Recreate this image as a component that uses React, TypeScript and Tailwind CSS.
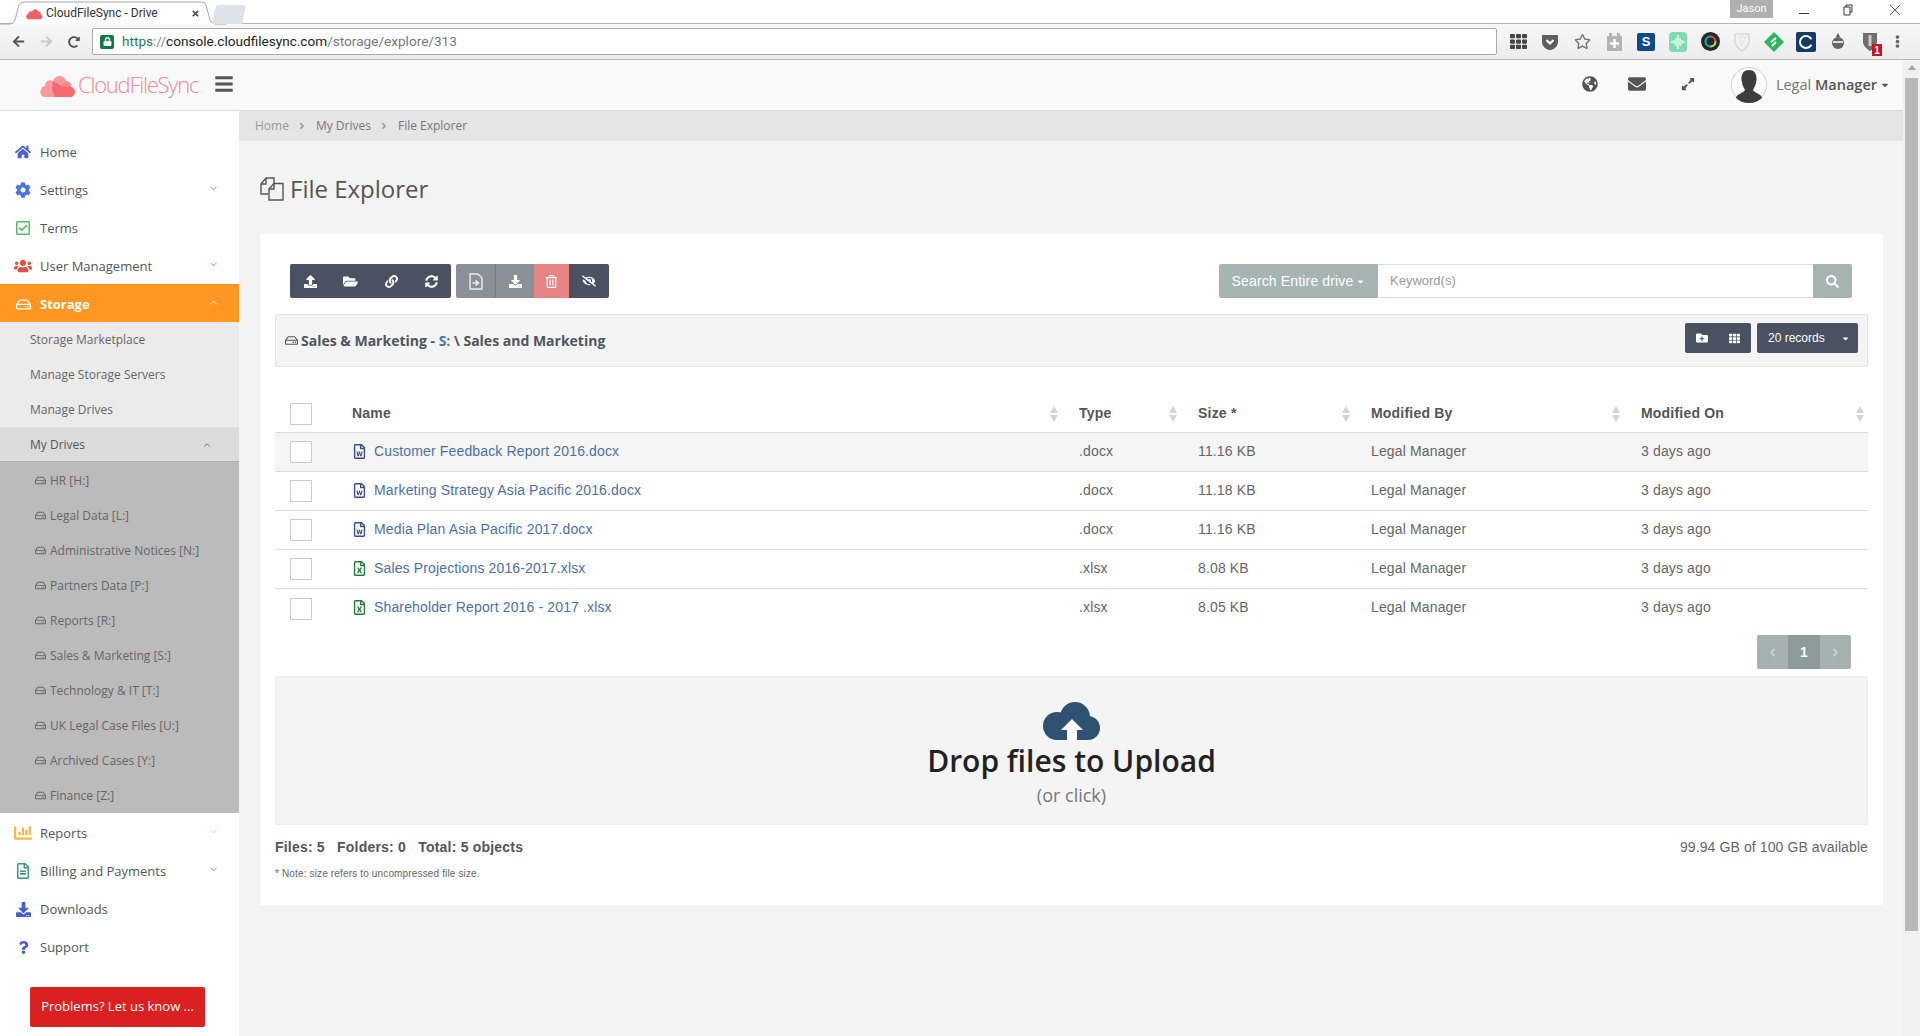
import React from "react";
import {
  FaHome, FaCog, FaRegCheckSquare, FaUsers, FaRegHdd, FaRegFileAlt, FaDownload, FaQuestion,
  FaUpload, FaFolderOpen, FaLink, FaSyncAlt, FaRegTrashAlt, FaEyeSlash, FaTh, FaSearch, FaGlobeAmericas, FaEnvelope,
  FaExpandAlt, FaRegFileWord, FaRegFileExcel, FaAngleLeft, FaAngleRight, FaCaretDown, FaBars, FaFolderPlus, FaChartBar, FaArrowLeft, FaArrowRight, FaRedoAlt, FaLock, FaRegStar, FaEllipsisV, FaTimes,
} from "react-icons/fa";
import { ChevronDown, ChevronUp } from "lucide-react";

const OS = "font-['Open_Sans',sans-serif]";
const AR = "font-['Liberation_Sans',Arial,sans-serif]";

function Logo() {
  return (
    <svg width="36" height="26" viewBox="0 0 36 26">
      <path d="M4 25 C-1 24 -1 15 5 14 C5 9 10 7 13 9 C15 3 24 2 26 9 C30 9 32 12 31 15 C36 16 36 24 31 25 Z" fill="#f79a9e" />
      <path d="M13 9 L21 14 L31 15 C36 16 36 24 31 25 L15 25 L12 18 Z" fill="#f9686e" />
      <path d="M21 14 L26 9 L31 15 Z" fill="#f7868a" />
    </svg>
  );
}

function Avatar() {
  return (
    <svg width="36" height="36" viewBox="0 0 36 36">
      <circle cx="18" cy="18" r="17.5" fill="#fff" stroke="#ccc" />
      <path d="M18 3 C24 3 26 8 25.5 13 C25 18 23 21 22 23 C23 26 31 27 31 31 C28 34 23 36 18 36 C13 36 8 34 5 31 C5 27 13 26 14 23 C13 21 11 18 10.5 13 C10 8 12 3 18 3 Z" fill="#3d3d3d" />
    </svg>
  );
}

function TabShape() {
  return (
    <svg className="absolute left-0 top-0" width="226" height="25" viewBox="0 0 226 25">
      <path d="M0 24 H10 Q14 24 15 20 L19 5 Q20 2 24 2 H201 Q205 2 206 5 L210 20 Q211 24 216 24 H226" fill="#fff" stroke="#a8a8a8" />
    </svg>
  );
}

function Ext({ children }: { children: React.ReactNode }) {
  return <div className="flex h-[20px] w-[32px] items-center justify-center">{children}</div>;
}

function BrowserChrome() {
  return (
    <div className="flex h-[60px] flex-col border-b border-[#b8b8b8] bg-white">
      <div className="flex h-[24px] items-start border-b border-[#b5b5b5] bg-white">
        <div className="relative h-[25px] w-[226px] shrink-0">
          <TabShape />
          <div className="relative flex h-[24px] items-center pl-[26px] pt-[2px]">
            <svg width="17" height="13" viewBox="0 0 36 26">
              <path d="M4 25 C-1 24 -1 15 5 14 C5 9 10 7 13 9 C15 3 24 2 26 9 C30 9 32 12 31 15 C36 16 36 24 31 25 Z" fill="#f25f64" />
            </svg>
            <span className={`ml-[3px] w-[145px] text-[12px] text-[#333] font-['Roboto',sans-serif]`}>CloudFileSync - Drive</span>
            <FaTimes className="text-[9px] text-[#555]" />
          </div>
        </div>
        <div className="mt-[5px] -ml-[12px] h-[19px] w-[30px] -skew-x-12 rounded-t-[3px] bg-[#dde1e8]" />
        <div className="flex-1" />
        <div className={`flex h-[18px] w-[43px] items-center justify-center bg-[#b0b0b0] text-[11px] text-[#fff] font-['Roboto',sans-serif]`}>Jason</div>
        <div className="flex w-[147px] items-center pt-[4px] text-[#333]">
          <div className="ml-[26px] h-[1px] w-[10px] bg-[#333] mt-[6px]" />
          <svg className="ml-[34px]" width="10" height="12" viewBox="0 0 10 12"><path d="M3 3 V1 H9 V8 H7 M1 3 H7 V11 H1 Z" fill="none" stroke="#333" /></svg>
          <svg className="ml-[37px]" width="10" height="10" viewBox="0 0 10 10"><path d="M0 0 L10 10 M10 0 L0 10" stroke="#333" strokeWidth="0.8" /></svg>
        </div>
      </div>
      <div className="flex h-[35px] items-center bg-[linear-gradient(#f7f7f7,#ececec)]">
        <div className="flex w-[92px] shrink-0 items-center pl-[12px] text-[#555]">
          <FaArrowLeft className="text-[13px]" />
          <FaArrowRight className="ml-[15px] text-[13px] text-[#ccc]" />
          <FaRedoAlt className="ml-[15px] text-[12px]" />
        </div>
        <div className="flex h-[27px] w-[1405px] shrink-0 items-center rounded-[2px] border border-[#aaa] bg-white pl-[7px] text-[13.6px] font-['Roboto',sans-serif]">
          <div className="flex h-[14px] w-[14px] items-center justify-center rounded-[2px] bg-[#0f7b3f]">
            <FaLock className="text-[9px] text-white" />
          </div>
          <span className="ml-[8px] text-[#2a7d4a]">https</span>
          <span className="text-[#888]">://</span>
          <span className="text-[#222]">console.cloudfilesync.com</span>
          <span className="text-[#777]">/storage/explore/313</span>
        </div>
        <div className="ml-[5px] flex items-center">
          <Ext><FaTh className="text-[17px] text-[#444]" /></Ext>
          <Ext>
            <svg width="18" height="18" viewBox="0 0 18 18"><path d="M1 2 H17 V9 C17 13 13 17 9 17 C5 17 1 13 1 9 Z" fill="#5f5f5f" /><path d="M5.5 7 L9 10.5 L12.5 7" fill="none" stroke="#fff" strokeWidth="2.2" /></svg>
          </Ext>
          <Ext><FaRegStar className="text-[17px] text-[#777]" /></Ext>
          <Ext>
            <svg width="17" height="18" viewBox="0 0 17 18"><rect x="1" y="3" width="15" height="15" fill="#b0b4b4" /><rect x="3" y="0" width="3" height="5" fill="#b0b4b4" /><rect x="11" y="0" width="3" height="5" fill="#b0b4b4" /><path d="M8.5 6 V15 M4 10.5 H13" stroke="#fff" strokeWidth="2.4" /></svg>
          </Ext>
          <Ext>
            <div className={`flex h-[18px] w-[18px] items-center justify-center rounded-[2px] bg-[#0e4a86] text-[13px] font-bold text-white ${AR}`}>S</div>
          </Ext>
          <Ext>
            <svg width="18" height="20" viewBox="0 0 18 20"><rect x="0" y="0" width="18" height="20" rx="4" fill="#7fdcb0" /><path d="M3 9 V11 M5 8 V12 M7 6 V14 M9 3 V17 M11 6 V14 M13 8 V12 M15 9 V11" stroke="#fff" strokeWidth="1.2" /></svg>
          </Ext>
          <Ext>
            <svg width="19" height="19" viewBox="0 0 19 19"><circle cx="9.5" cy="9.5" r="9.5" fill="#25272b" /><circle cx="9.5" cy="9.5" r="5" fill="none" stroke="#2aa" strokeWidth="2" /><path d="M9.5 4.5 A5 5 0 0 1 14.5 9.5" fill="none" stroke="#d33" strokeWidth="2" /><path d="M14.5 9.5 A5 5 0 0 1 9.5 14.5" fill="none" stroke="#dc3" strokeWidth="2" /></svg>
          </Ext>
          <Ext>
            <svg width="16" height="20" viewBox="0 0 16 20"><path d="M1 2 H15 V9 C15 14 11 17 8 19 C5 17 1 14 1 9 Z" fill="none" stroke="#d8d8d8" strokeWidth="1.5" /><path d="M5 5 H11 L8 14 Z" fill="none" stroke="#e0e0e0" /></svg>
          </Ext>
          <Ext>
            <svg width="20" height="20" viewBox="0 0 20 20"><path d="M10 0 L20 10 L10 20 L0 10 Z" fill="#2fb45f" /><path d="M7 10 L12 6 M8 14 L12 10" stroke="#fff" strokeWidth="2" /></svg>
          </Ext>
          <Ext>
            <svg width="20" height="20" viewBox="0 0 20 20"><rect width="20" height="20" rx="2" fill="#143a66" /><circle cx="10" cy="10" r="6" fill="none" stroke="#fff" strokeWidth="2" /><path d="M10 10 L18 6 V14 Z" fill="#143a66" /></svg>
          </Ext>
          <Ext>
            <svg width="14" height="19" viewBox="0 0 14 19"><circle cx="7" cy="11" r="6" fill="#666" /><path d="M5 5 L7 1 L9 5 Z" fill="#555" /><rect x="2" y="9" width="10" height="2" fill="#ddd" /></svg>
          </Ext>
          <Ext>
            <div className="relative">
              <svg width="16" height="19" viewBox="0 0 16 19"><path d="M1 1 H15 V10 C15 14 11 17 8 19 C5 17 1 14 1 10 Z" fill="#6d6d6d" /><path d="M8 3 V14" stroke="#ccc" strokeWidth="3" /></svg>
              <div className={`absolute -right-[4px] -bottom-[5px] flex h-[12px] w-[10px] items-center justify-center bg-[#c5161d] text-[10px] font-bold text-white ${AR}`}>1</div>
            </div>
          </Ext>
          <FaEllipsisV className="ml-[5px] text-[13px] text-[#666]" />
        </div>
      </div>
    </div>
  );
}

function Header() {
  return (
    <div className="flex h-[51px] shrink-0 items-center border-b border-[#dcdcdc] bg-[#f9f9f9]">
      <div className="ml-[40px]"><Logo /></div>
      <span className={`mb-[1px] ml-[2px] text-[22px] font-light tracking-[-1.24px] text-[#ef8b92] ${OS}`}>CloudFileSync</span>
      <FaBars className="mb-[3px] ml-[16px] text-[20px] text-[#555]" />
      <div className="flex-1" />
      <FaGlobeAmericas className="mb-[3px] text-[16px] text-[#555]" />
      <FaEnvelope className="mb-[3px] ml-[30px] text-[18px] text-[#555]" />
      <FaExpandAlt className="mb-[3px] ml-[35px] text-[14px] text-[#555]" />
      <div className="ml-[36px]"><Avatar /></div>
      <span className={`ml-[9px] text-[14.5px] text-[#777] ${OS}`}>Legal <span className="font-semibold text-[#555]">Manager</span></span>
      <FaCaretDown className="ml-[3px] mr-[13px] text-[10px] text-[#555]" />
    </div>
  );
}

function NavItem({ icon, label, chevron, active, chevColor }: { icon: React.ReactNode; label: string; chevron?: "down" | "up"; active?: boolean; chevColor?: string }) {
  return (
    <div className={`flex h-[38px] items-center ${active ? "bg-[#ff9722] font-bold text-white" : "text-[#555]"} text-[13px] ${OS}`}>
      <div className="flex w-[40px] shrink-0 items-center justify-center pl-[6px] pt-[2px]">{icon}</div>
      <span className="flex-1 pt-[4px]">{label}</span>
      {chevron === "down" && <ChevronDown size={11} strokeWidth={1.5} className={`mb-[2px] mr-[20px] ${chevColor ?? "text-[#556]"}`} />}
      {chevron === "up" && <ChevronUp size={11} strokeWidth={2} className="mb-[2px] mr-[20px] text-white" />}
    </div>
  );
}

const drives = ["HR [H:]", "Legal Data [L:]", "Administrative Notices [N:]", "Partners Data [P:]", "Reports [R:]", "Sales & Marketing [S:]", "Technology & IT [T:]", "UK Legal Case Files [U:]", "Archived Cases [Y:]", "Finance [Z:]"];

function Sidebar() {
  return (
    <div className="w-[239px] shrink-0 bg-white pt-[21px]">
      <NavItem icon={<FaHome className="text-[16px] text-[#4a62c9]" />} label="Home" />
      <NavItem icon={<FaCog className="text-[16px] text-[#4a74e0]" />} label="Settings" chevron="down" chevColor="text-[#4a62a9]" />
      <NavItem icon={<FaRegCheckSquare className="text-[16px] text-[#5cb86c]" />} label="Terms" />
      <NavItem icon={<FaUsers className="text-[18px] text-[#e0534a]" />} label="User Management" chevron="down" chevColor="text-[#c9534a]" />
      <NavItem icon={<FaRegHdd className="text-[15px] text-white" />} label="Storage" chevron="up" active />
      <div className={`bg-[#ebebeb] text-[12px] text-[#666] ${OS}`}>
        <div className="flex h-[35px] items-center pl-[30px]">Storage Marketplace</div>
        <div className="flex h-[35px] items-center pl-[30px]">Manage Storage Servers</div>
        <div className="flex h-[35px] items-center pl-[30px]">Manage Drives</div>
        <div className="flex h-[35px] items-center justify-between border-b border-[#b0b0b0] bg-[#dcdcdc] pl-[30px] pr-[27px] pt-[2px] text-[#555]">
          My Drives
          <ChevronUp size={10} strokeWidth={2} className="text-[#555]" />
        </div>
      </div>
      <div className={`bg-[#bbbbbb] pt-[1px] text-[12px] text-[#666] ${OS}`}>
        {drives.map((d) => (
          <div key={d} className="flex h-[35px] items-center pl-[35px]">
            <FaRegHdd className="mr-[4px] text-[11px]" />
            {d}
          </div>
        ))}
      </div>
      <NavItem icon={<FaChartBar className="text-[18px] text-[#f5b64a]" />} label="Reports" chevron="down" chevColor="text-[#f0b98a]" />
      <NavItem icon={<FaRegFileAlt className="text-[16px] text-[#3a9a70]" />} label="Billing and Payments" chevron="down" chevColor="text-[#556]" />
      <NavItem icon={<FaDownload className="text-[15px] text-[#4a5fc9]" />} label="Downloads" />
      <NavItem icon={<FaQuestion className="text-[13px] text-[#4a5fc9]" />} label="Support" />
      <div className="pl-[30px] pt-[22px]">
        <div className={`flex h-[40px] w-[175px] items-center justify-center rounded-[2px] bg-[#da2020] text-[13px] text-white ${OS}`}>Problems? Let us know ...</div>
      </div>
    </div>
  );
}

function SortIcon() {
  return (
    <svg width="8" height="16" viewBox="0 0 8 16">
      <path d="M4 0 L8 7 H0 Z M0 9 H8 L4 16 Z" fill="#d5d5d5" />
    </svg>
  );
}

function Th({ label, last }: { label: string; last?: boolean }) {
  return (
    <div className={`flex items-center justify-between ${last ? "pr-[4px]" : "pr-[21px]"}`}>
      <span className="font-bold tracking-[0.2px] text-[#555]">{label}</span>
      <SortIcon />
    </div>
  );
}

const COLS = "grid grid-cols-[77px_727px_119px_173px_270px_227px] items-center";

const files = [
  { n: "Customer Feedback Report 2016.docx", t: ".docx", s: "11.16 KB", x: false },
  { n: "Marketing Strategy Asia Pacific 2016.docx", t: ".docx", s: "11.18 KB", x: false },
  { n: "Media Plan Asia Pacific 2017.docx", t: ".docx", s: "11.16 KB", x: false },
  { n: "Sales Projections 2016-2017.xlsx", t: ".xlsx", s: "8.08 KB", x: true },
  { n: "Shareholder Report 2016 - 2017 .xlsx", t: ".xlsx", s: "8.05 KB", x: true },
];

function Check({ row }: { row?: boolean }) {
  return <div className={`ml-[15px] h-[22px] w-[22px] border border-[#ccc] bg-white ${row ? "mt-[2px]" : ""}`} />;
}

function ToolBtn({ children, bg, w }: { children: React.ReactNode; bg: string; w: string }) {
  return <div className={`flex h-full items-center justify-center ${bg} ${w}`}>{children}</div>;
}

function FileArrowIcon() {
  return (
    <svg width="14" height="17" viewBox="0 0 14 17">
      <path d="M1 1 H9 L13 5 V16 H1 Z" fill="none" stroke="#eee" strokeWidth="1.4" />
      <path d="M3.5 10 H8 M6.5 7.5 L9.5 10 L6.5 12.5" fill="none" stroke="#eee" strokeWidth="1.6" />
    </svg>
  );
}

function TitleIcon() {
  return (
    <svg width="24" height="24" viewBox="0 0 24 24" fill="none" stroke="#555" strokeWidth="1.4">
      <path d="M8 17 H1 V7 L6 1 H14 V6" />
      <path d="M9 12 L14 6.5 H23 V23 H9 Z" />
      <path d="M1 7 H6 V1 M9 12 H14 V6.5" />
    </svg>
  );
}

function UploadCloud() {
  return (
    <svg width="60" height="38" viewBox="0 0 60 38">
      <g fill="#2f5272">
        <circle cx="15" cy="24" r="14" />
        <circle cx="33" cy="15" r="15" />
        <circle cx="46" cy="26" r="12" />
        <rect x="15" y="18" width="31" height="20" />
      </g>
      <path d="M30 17 L41 28 H35 V38 H25 V28 H19 Z" fill="#fff" />
    </svg>
  );
}

function FileCard() {
  return (
    <div className={`mx-[20px] ml-[21px] h-[671px] bg-white px-[15px] pt-[30px] ${AR}`}>
      <div className="flex h-[34px] items-center">
        <div className="ml-[15px] flex h-[34px] overflow-hidden rounded-[2px] bg-[#4a5160] text-white">
          <ToolBtn bg="" w="w-[40px]"><FaUpload className="text-[13px]" /></ToolBtn>
          <ToolBtn bg="" w="w-[41px]"><FaFolderOpen className="text-[15px]" /></ToolBtn>
          <ToolBtn bg="" w="w-[41px]"><FaLink className="text-[13px]" /></ToolBtn>
          <ToolBtn bg="" w="w-[39px]"><FaSyncAlt className="text-[13px]" /></ToolBtn>
        </div>
        <div className="ml-[5px] flex h-[34px] overflow-hidden rounded-[2px] text-white">
          <ToolBtn bg="bg-[#8b8f98] border-r border-[#777b84]" w="w-[40px]"><FileArrowIcon /></ToolBtn>
          <ToolBtn bg="bg-[#8b8f98]" w="w-[38px]"><FaDownload className="text-[13px]" /></ToolBtn>
          <ToolBtn bg="bg-[#e68484]" w="w-[35px]"><FaRegTrashAlt className="text-[13px]" /></ToolBtn>
          <ToolBtn bg="bg-[#4a5160]" w="w-[40px]"><FaEyeSlash className="text-[14px]" /></ToolBtn>
        </div>
        <div className="flex-1" />
        <div className="mr-[16px] flex h-[34px] w-[633px] overflow-hidden rounded-[2px] text-[14px]">
          <div className="flex w-[159px] items-center justify-center bg-[#a6b4b4] tracking-[0.15px] text-white">
            Search Entire drive
            <FaCaretDown className="ml-[3px] text-[9px]" />
          </div>
          <div className="flex flex-1 items-center border-y border-[#ddd] bg-white pl-[12px] text-[13px] text-[#999]">Keyword(s)</div>
          <div className="flex w-[39px] items-center justify-center bg-[#a6b4b4] text-white"><FaSearch className="text-[13px]" /></div>
        </div>
      </div>

      <div className="mt-[16px] flex h-[53px] items-center justify-between rounded-[2px] border border-[#e4e4e4] bg-[#f4f4f4] pl-[9px] pr-[9px]">
        <div className={`flex items-center text-[14px] font-bold text-[#4f5561] ${OS}`}>
          <FaRegHdd className="mr-[3px] text-[13px]" />
          <span>Sales &amp; Marketing - <span className="text-[#3c78b5]">S:</span> \ Sales and Marketing</span>
        </div>
        <div className="mb-[5px] flex h-[30px] items-center text-white">
          <div className="flex h-[30px] w-[66px] rounded-[2px] bg-[#4a5160]">
            <div className="flex w-[33px] items-center justify-center"><FaFolderPlus className="text-[12px]" /></div>
            <div className="flex w-[33px] items-center justify-center"><FaTh className="text-[11px]" /></div>
          </div>
          <div className="ml-[6px] flex h-[30px] w-[101px] items-center rounded-[2px] bg-[#4a5160] pl-[11px] text-[12px]">
            <span className="flex-1">20 records</span>
            <FaCaretDown className="mr-[8px] text-[9px]" />
          </div>
        </div>
      </div>

      <div className={`${COLS} mt-[24px] h-[42px] border-b border-[#ddd] pt-[4px] text-[14px]`}>
        <Check />
        <Th label="Name" />
        <Th label="Type" />
        <Th label="Size *" />
        <Th label="Modified By" />
        <Th label="Modified On" last />
      </div>
      {files.map((f, i) => (
        <div key={f.n} className={`${COLS} h-[39px] pb-[2px] text-[14px] tracking-[0.14px] text-[#666] ${i === 0 ? "bg-[#f5f5f5]" : ""} ${i < 4 ? "border-b border-[#ddd]" : ""}`}>
          <Check row />
          <div className="flex items-center text-[#4c70a6]">
            {f.x ? <FaRegFileExcel className="mr-[7px] text-[15px] text-[#2a7a3e]" /> : <FaRegFileWord className="mr-[7px] text-[15px] text-[#3a4f8a]" />}
            {f.n}
          </div>
          <div>{f.t}</div>
          <div>{f.s}</div>
          <div>Legal Manager</div>
          <div>3 days ago</div>
        </div>
      ))}

      <div className="mt-[7px] flex h-[34px] justify-end pr-[17px]">
        <div className="flex overflow-hidden rounded-[2px] bg-[#a5b1b1] text-white">
          <div className="flex w-[31px] items-center justify-center"><FaAngleLeft className="text-[13px] text-[#c5cfcf]" /></div>
          <div className="flex w-[32px] items-center justify-center rounded-[2px] bg-[#8c9a9a] text-[14px] font-bold">1</div>
          <div className="flex w-[31px] items-center justify-center"><FaAngleRight className="text-[13px] text-[#c5cfcf]" /></div>
        </div>
      </div>

      <div className={`mt-[7px] flex h-[149px] flex-col items-center rounded-[2px] border border-[#eee] bg-[#f4f4f4] ${OS}`}>
        <div className="mt-[25px] h-[38px]"><UploadCloud /></div>
        <div className="mt-[1px] text-[30px] font-semibold leading-[40px] text-[#222]">Drop files to Upload</div>
        <div className="mt-[1px] text-[18px] leading-[26px] text-[#777]">(or click)</div>
      </div>

      <div className="mt-[14px] flex items-center justify-between text-[14px] leading-[16px]">
        <span className="font-bold tracking-[0.2px] text-[#555]">Files: 5 &nbsp; Folders: 0 &nbsp; Total: 5 objects</span>
        <span className="tracking-[0.1px] text-[#666]">99.94 GB of 100 GB available</span>
      </div>
      <div className="mt-[11px] text-[10px] tracking-[0.15px] text-[#666]">* Note: size refers to uncompressed file size.</div>
    </div>
  );
}

function Main() {
  return (
    <div className="flex-1 bg-[#f3f3f3]">
      <div className={`flex h-[30px] items-center bg-[#e5e5e5] pl-[16px] text-[12px] text-[#777] ${OS}`}>
        <span className="text-[#999]">Home</span>
        <FaAngleRight className="mx-[8.5px] text-[10px] text-[#999]" />
        <span>My Drives</span>
        <FaAngleRight className="mx-[8.5px] text-[10px] text-[#999]" />
        <span>File Explorer</span>
      </div>
      <div className={`flex h-[93px] items-center pl-[21px] pt-[2px] text-[24px] text-[#555] ${OS}`}>
        <span className="mr-[6px]"><TitleIcon /></span>
        File Explorer
      </div>
      <FileCard />
    </div>
  );
}

function Scrollbar() {
  return (
    <div className="flex w-[17px] shrink-0 flex-col items-center bg-[#f1f1f1] pt-[5px]">
      <div className="h-0 w-0 border-x-[4px] border-b-[5px] border-x-transparent border-b-[#a8a8a8]" />
      <div className="mt-[8px] h-[853px] w-[13px] bg-[#b8b8b8]" />
    </div>
  );
}

export default function App() {
  return (
    <div className="flex h-[1036px] w-full flex-col overflow-hidden bg-[#f3f3f3]">
      <BrowserChrome />
      <div className="flex min-h-0 flex-1">
        <div className="flex min-w-0 flex-1 flex-col">
          <Header />
          <div className="flex min-h-0 flex-1">
            <Sidebar />
            <Main />
          </div>
        </div>
        <Scrollbar />
      </div>
    </div>
  );
}
